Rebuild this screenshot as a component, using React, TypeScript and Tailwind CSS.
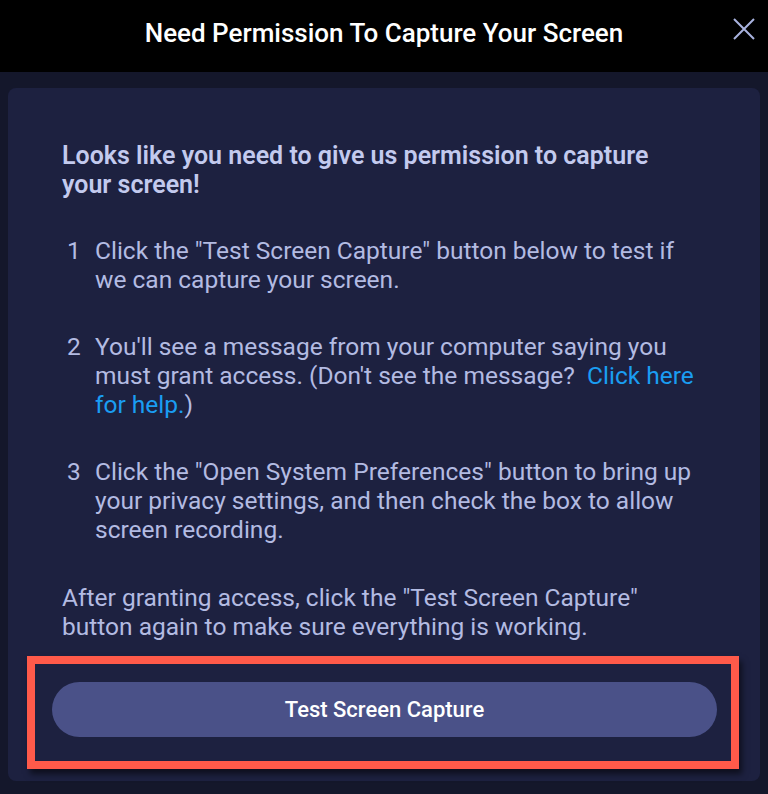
export default function App() {
  const steps = [
    {
      n: "1",
      body: <>Click the "Test Screen Capture" button below to test if we can capture your screen.</>,
    },
    {
      n: "2",
      body: (
        <>
          You'll see a message from your computer saying you must grant access. (Don't see the message?{"\u00a0 "}
          <a href="#" className="text-[#1a9df2]">Click here for help.</a>)
        </>
      ),
    },
    {
      n: "3",
      body: (
        <>
          Click the "Open System Preferences" button to bring up your privacy settings, and then check the box to
          allow screen recording.
        </>
      ),
    },
  ];

  return (
    <div className="relative w-[768px] h-[794px] bg-[#14172b] font-['Roboto',sans-serif] overflow-hidden">
      {/* bit of the mouse cursor caught in the capture */}
      <svg className="absolute left-0 top-0" width="8" height="12" viewBox="0 0 8 12">
        <path d="M0 0 L7 6 L3 6 L5 10 L3 11 L1 7 L0 8 Z" fill="#fff" />
      </svg>

      <header className="h-[72px] bg-black flex items-center justify-center relative">
        <h1 className="text-white text-[26px] font-medium -mt-[6px]">
          Need Permission To Capture Your Screen
        </h1>
        <button className="absolute left-[733px] top-[18px] text-[#a9b3df]">
          <svg width="22" height="22" viewBox="0 0 22 22" fill="none" stroke="currentColor" strokeWidth="2">
            <path d="M1 1 L21 21 M21 1 L1 21" />
          </svg>
        </button>
      </header>

      <div className="px-2 pt-4">
        <div className="bg-[#1d2140] rounded-lg pt-[53px] pb-[12px]">
          <div className="px-[54px]">
            <h2 className="text-[#c3caee] text-[25px] leading-[29px] font-semibold pr-[40px]">
              Looks like you need to give us permission to capture your screen!
            </h2>

            <ol className="mt-[37px] flex flex-col gap-[38px]">
              {steps.map((s) => (
                <li key={s.n} className="flex text-[#b3bbe2] text-[24.5px] leading-[29px]">
                  <span className="w-[33px] shrink-0 pl-[5px]">{s.n}</span>
                  <p className="pr-[8px]">{s.body}</p>
                </li>
              ))}
            </ol>

            <p className="mt-[39px] text-[#b3bbe2] text-[24.5px] leading-[29px]">
              After granting access, click the "Test Screen Capture" button again to make sure everything is working.
            </p>
          </div>

          <div className="mt-[15px] ml-[19px] mr-[21px] border-[8px] border-[#ff5a4a] shadow-[3px_5px_6px_rgba(0,0,0,0.55)] pl-[17px] pr-[14px] pt-[18px] pb-[24px]">
            <button className="w-full h-[55px] rounded-full bg-[#4a5188] text-white text-[22px] font-medium">
              Test Screen Capture
            </button>
          </div>
        </div>
      </div>
    </div>
  );
}
